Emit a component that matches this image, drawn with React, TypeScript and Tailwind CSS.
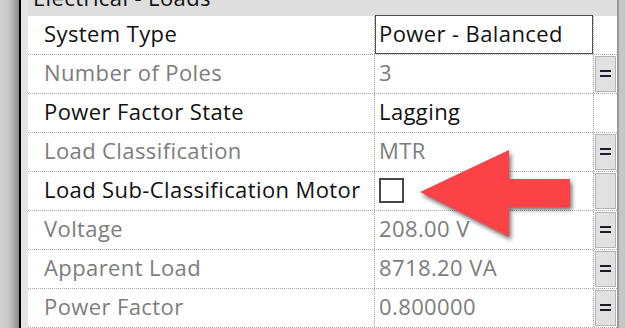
import React from 'react';

type Row = {
  label: string;
  value: string;
  muted?: boolean;
  kind?: 'box' | 'check';
  button?: 'eq' | 'blank';
};

const ROWS: Row[] = [
  { label: 'System Type', value: 'Power - Balanced', kind: 'box' },
  { label: 'Number of Poles', value: '3', muted: true, button: 'eq' },
  { label: 'Power Factor State', value: 'Lagging' },
  { label: 'Load Classification', value: 'MTR', muted: true, button: 'eq' },
  { label: 'Load Sub-Classification Motor', value: '', kind: 'check', button: 'blank' },
  { label: 'Voltage', value: '208.00 V', muted: true, button: 'eq' },
  { label: 'Apparent Load', value: '8718.20 VA', muted: true, button: 'eq' },
  { label: 'Power Factor', value: '0.800000', muted: true, button: 'eq' },
];

const EqButton: React.FC<{ blank?: boolean }> = ({ blank }) => (
  <div className="mx-[1px] my-[1px] h-[36px] bg-[#e1e1e1] border border-[#b4b4b4] flex flex-col items-center justify-center gap-[3px]">
    {!blank && (
      <>
        <div className="w-[11px] h-[2px] bg-[#1c1c28]" />
        <div className="w-[11px] h-[2px] bg-[#1c1c28]" />
      </>
    )}
  </div>
);

const PropertyRow: React.FC<{ row: Row }> = ({ row }) => {
  const color = row.muted ? 'text-[#7d7d7d]' : 'text-[#111]';
  return (
    <div className="grid grid-cols-[346px_219px_24px] h-[40px] border-b border-dotted border-[#a8a8a8]">
      <div className={`pl-[16px] pb-[3px] flex items-center whitespace-nowrap ${color}`}>{row.label}</div>
      <div className="border-l border-dotted border-[#a8a8a8] flex items-center">
        {row.kind === 'box' ? (
          <div className="h-[39px] -mt-[1px] w-[218px] border-[1.5px] border-[#505050] pl-[3px] pb-[3px] flex items-center text-[#111] whitespace-nowrap">
            {row.value}
          </div>
        ) : row.kind === 'check' ? (
          <div className="ml-[4px] w-[25px] h-[25px] border-2 border-[#474747] bg-white" />
        ) : (
          <span className={`pl-[4px] pb-[3px] whitespace-nowrap ${color}`}>{row.value}</span>
        )}
      </div>
      <div className="border-l border-dotted border-[#a8a8a8]">
        {row.button && <EqButton blank={row.button === 'blank'} />}
      </div>
    </div>
  );
};

export default function App() {
  return (
    <div className="relative w-[625px] h-[328px] overflow-hidden flex bg-white font-['Open_Sans',sans-serif] text-[22px] tracking-[0.4px] leading-none">
      <div className="w-[19px] shrink-0 bg-gradient-to-r from-[#d2d2d2] via-[#c4c4c4] to-[#8c8c8c]" />
      <div className="w-[2px] shrink-0 bg-black" />
      <div className="w-[7px] shrink-0 bg-[#e4e4e4]" />

      <div className="w-[589px] shrink-0 flex flex-col">
        <div className="h-[16px] bg-[#dedede] overflow-hidden pl-[5px]">
          <div className="-mt-[14px] text-[#111] whitespace-nowrap">Electrical - Loads</div>
        </div>
        {ROWS.map((r) => (
          <PropertyRow key={r.label} row={r} />
        ))}
      </div>

      <div className="w-[2px] shrink-0 bg-[#9a9a9a]" />
      <div className="flex-1 bg-[#c6c6c6]" />

      <svg className="absolute left-0 top-0 pointer-events-none" width="625" height="328">
        <polygon
          points="420,192 509,150 509,179 570,179 570,207 509,207 509,237"
          fill="#fb4246"
          style={{ filter: 'drop-shadow(2px 3px 2px rgba(0,0,0,0.55))' }}
        />
      </svg>
    </div>
  );
}
